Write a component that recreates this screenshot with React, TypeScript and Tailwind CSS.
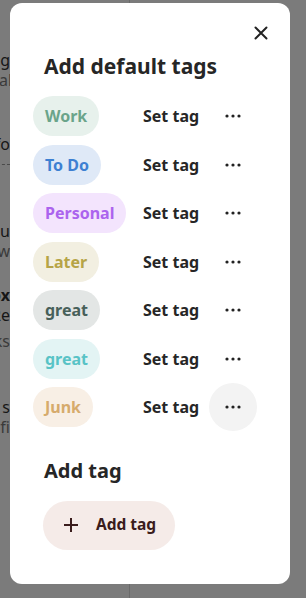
import React from "react";

const tags = [
  { name: "Work", bg: "bg-[#e7f1ec]", fg: "text-[#6aa48a]" },
  { name: "To Do", bg: "bg-[#dfe9f7]", fg: "text-[#3d80d2]" },
  { name: "Personal", bg: "bg-[#f3e4fd]", fg: "text-[#ab63ee]" },
  { name: "Later", bg: "bg-[#f2efe1]", fg: "text-[#b6a446]" },
  { name: "great", bg: "bg-[#e3e6e5]", fg: "text-[#47605a]" },
  { name: "great", bg: "bg-[#e3f4f4]", fg: "text-[#58c3c6]" },
  { name: "Junk", bg: "bg-[#f8efe5]", fg: "text-[#d6ab6c]" },
];

function Dots() {
  return (
    <svg width="16" height="4" viewBox="0 0 16 4" fill="#222">
      <circle cx="2" cy="2" r="1.6" />
      <circle cx="8" cy="2" r="1.6" />
      <circle cx="14" cy="2" r="1.6" />
    </svg>
  );
}

export default function App() {
  const font = { fontFamily: '"Noto Sans", "Open Sans", sans-serif' };
  return (
    <div className="relative w-[306px] h-[598px] overflow-hidden bg-[#7b7b7b]" style={font}>
      {/* page underneath */}
      <div className="flex h-full">
        <div className="w-[130px] shrink-0 border-r border-[#6a6a6a] overflow-hidden">
          <div className="ml-[-90px] w-[200px] text-right pr-[100px] whitespace-nowrap text-[#161616] text-[16px] leading-[20px]">
            <div className="mt-[50px]">Sync mesag</div>
            <div className="text-[#3a3a3a]">Detail normal r</div>
            <div className="mt-[44px]">Info about fo</div>
            <div className="mt-[10px] border-b border-dashed border-[#4a4a4a] w-full"></div>
            <div className="mt-[56px]">Menu</div>
            <div className="text-[#3a3a3a]">Overview</div>
            <div className="mt-[24px] font-bold">Box</div>
            <div>Move Re</div>
            <div className="mt-[6px] text-[#3a3a3a]">Stacks</div>
            <div className="mt-[46px]">Move to s</div>
            <div className="text-[#3a3a3a]">Some of fi</div>
          </div>
        </div>
      </div>

      {/* dialog */}
      <div className="absolute left-[10px] top-[3px] w-[280px] h-[581px] bg-white rounded-[12px] flex flex-col">
        <button className="absolute right-[19px] top-[20px] w-[20px] h-[20px] flex items-center justify-center">
          <svg width="14" height="14" viewBox="0 0 14 14" stroke="#222" strokeWidth="2" strokeLinecap="round">
            <path d="M1.5 1.5L12.5 12.5M12.5 1.5L1.5 12.5" />
          </svg>
        </button>
        <h2 className="mt-[49px] ml-[34px] text-[21px] leading-[28px] font-bold text-[#262626]">
          Add default tags
        </h2>
        <div className="mt-[12px] flex flex-col">
          {tags.map((t, i) => (
            <div key={i} className="h-[48.5px] flex items-center pl-[23px]">
              <div className="w-[110px] flex">
                <span
                  className={`h-[40px] px-[12px] rounded-full flex items-center text-[16px] font-bold ${t.bg} ${t.fg}`}
                >
                  {t.name}
                </span>
              </div>
              <span className="text-[16px] font-bold text-[#262626] w-[66px]">Set tag</span>
              <span
                className={`w-[48px] h-[48px] rounded-full flex items-center justify-center ${
                  i === 6 ? "bg-[#f3f3f3]" : ""
                }`}
              >
                <Dots />
              </span>
            </div>
          ))}
        </div>
        <h2 className="mt-[25px] ml-[34px] text-[20px] leading-[28px] font-bold text-[#262626]">Add tag</h2>
        <button className="mt-[16px] ml-[33px] w-[132px] h-[49px] rounded-full bg-[#f5ebe8] flex items-center pl-[21px] text-[#3a1c1c]">
          <svg width="14" height="14" viewBox="0 0 14 14" stroke="#3a1c1c" strokeWidth="2">
            <path d="M7 0V14M0 7H14" />
          </svg>
          <span className="ml-[18px] text-[15.5px] font-bold">Add tag</span>
        </button>
      </div>
    </div>
  );
}
